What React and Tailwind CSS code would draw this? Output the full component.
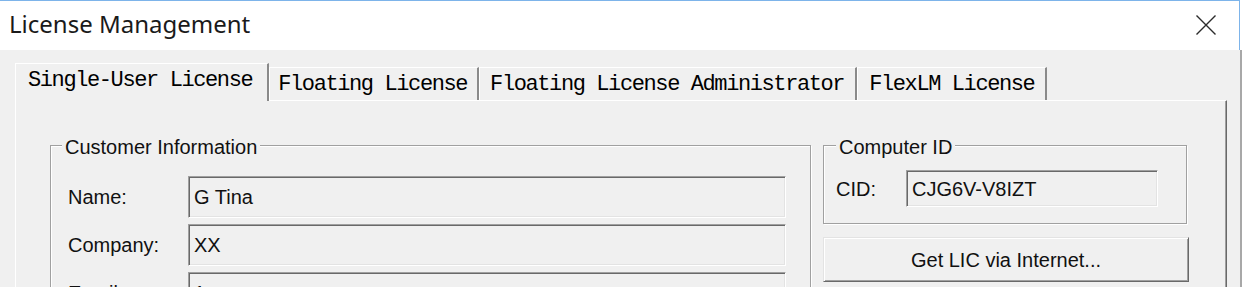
import React from "react";

const tabs = [
  { label: "Single-User License", active: true, pad: "pl-[12px] pr-[15px]" },
  { label: "Floating License", pad: "pl-[8px] pr-[10px]" },
  { label: "Floating License Administrator", pad: "pl-[10px] pr-[11px]" },
  { label: "FlexLM License", pad: "pl-[11px] pr-[11px]" },
];

const sunken =
  "border border-t-[#a0a0a0] border-l-[#a0a0a0] border-b-white border-r-white shadow-[inset_1px_1px_0_#696969,inset_-1px_-1px_0_#e3e3e3]";

// read-only edit box, classic sunken look
const Field = ({ value, className = "" }) => (
  <div className={`flex items-center bg-[#f0f0f0] pl-[5px] ${sunken} ${className}`}>
    {value}
  </div>
);

// legendOffset: legend sits relative to the fieldset padding, so it differs per box
const Group = ({ title, className = "", legendOffset = "", children }) => (
  <fieldset
    className={`border border-[#a0a0a0] shadow-[1px_1px_0_#fff,inset_1px_1px_0_#fff] ${className}`}
  >
    <legend className={`px-[3px] pt-[5px] leading-[23px] bg-[#f0f0f0] ${legendOffset}`}>{title}</legend>
    {children}
  </fieldset>
);

const Row = ({ label, value }) => (
  <div className="flex items-center h-[42px]">
    <span className="w-[120px] shrink-0">{label}</span>
    <Field value={value} className="w-[598px] h-full" />
  </div>
);

export default function App() {
  return (
    <div className="w-[1246px] h-[287px] bg-white overflow-hidden">
      <div className="w-[1242px]">
        {/* title bar */}
        <div className="w-[1240px] h-[50px] bg-white border-t border-r border-[#7db4ea] flex justify-between">
          <span className="pl-[9px] mt-[6px] leading-[33px] text-[24px] text-[#1a1a1a] font-['Noto_Sans',sans-serif]">
            License Management
          </span>
          <svg className="mt-[14px] mr-[23px]" width="20" height="20" viewBox="0 0 20 20">
            <path d="M0.5 0.5L19.5 19.5M19.5 0.5L0.5 19.5" stroke="#2b2b2b" strokeWidth="1.4" fill="none" />
          </svg>
        </div>

        {/* dialog body */}
        <div className="h-[237px] bg-[#f0f0f0] border-r-2 border-[#a8a8a8] pl-[15px] pr-[13px] pt-[13px] text-[#111]">
          <div className="flex items-end font-['Liberation_Mono',monospace] text-[22px] tracking-[-1.4px] text-black">
            {tabs.map((t) =>
              t.active ? (
                <div
                  key={t.label}
                  className={`relative z-10 -mb-px h-[38px] flex items-center pb-[4px] bg-[#f0f0f0] border-l border-t border-white border-r-2 border-r-[#8a8a8a] whitespace-nowrap ${t.pad}`}
                >
                  {t.label}
                </div>
              ) : (
                <div
                  key={t.label}
                  className={`h-[33px] flex items-center border-l border-t border-white border-r-2 border-r-[#8a8a8a] whitespace-nowrap ${t.pad}`}
                >
                  {t.label}
                </div>
              )
            )}
          </div>

          <div className="h-full border-l border-t border-white border-r border-r-[#696969] shadow-[inset_-1px_0_0_#a0a0a0] pl-[34px] pt-[30px] flex items-start gap-[12px] font-['Liberation_Sans',Arial,sans-serif] text-[20px]">
            <Group
              title="Customer Information"
              legendOffset="-ml-[6px]"
              className="w-[761px] pl-[17px] pr-[24px] pt-[17px]"
            >
              <div className="flex flex-col gap-[6px]">
                <Row label="Name:" value="G Tina" />
                <Row label="Company:" value="XX" />
                <Row label="Email:" value="1" />
              </div>
            </Group>

            <div className="w-[366px] flex flex-col">
              <Group
                title="Computer ID"
                legendOffset="ml-0"
                className="w-[364px] pl-[12px] pr-[28px] pt-[11px] pb-[16px]"
              >
                <div className="flex items-center h-[37px]">
                  <span className="w-[70px] shrink-0">CID:</span>
                  <Field value="CJG6V-V8IZT" className="w-[252px] h-full" />
                </div>
              </Group>
              <button className="mt-[13px] w-[366px] h-[45px] bg-[#f0f0f0] border border-t-[#e3e3e3] border-l-[#e3e3e3] border-b-[#696969] border-r-[#696969] shadow-[inset_1px_1px_0_#fff,inset_-1px_-1px_0_#a0a0a0]">
                Get LIC via Internet...
              </button>
            </div>
          </div>
        </div>
      </div>
    </div>
  );
}
